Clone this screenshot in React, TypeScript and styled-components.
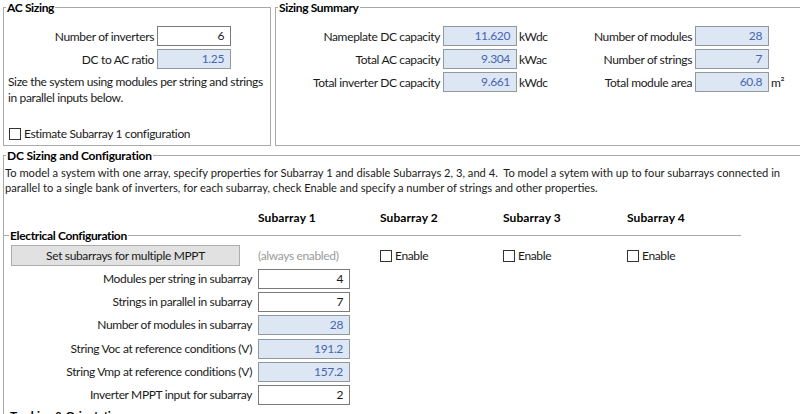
import React from "react";
import styled, { createGlobalStyle } from "styled-components";

const GlobalStyle = createGlobalStyle`
  html, body {
    margin: 0;
    padding: 0;
    background: #ffffff;
  }
  body {
    width: 800px;
    height: 414px;
    overflow: hidden;
    font-family: Lato, "Noto Sans", sans-serif;
    font-size: 12px;
    letter-spacing: -0.35px;
    color: #1a1a1a;
  }
`;

const Page = styled.div`
  width: 800px;
  height: 414px;
  overflow: hidden;
  padding-left: 3px;
  box-sizing: border-box;
`;

const TopRow = styled.div`
  display: flex;
  gap: 4px;
  width: 1000px;
`;

const Group = styled.fieldset<{ $w: number; $h: number }>`
  margin: 0;
  padding: 0;
  width: ${(p) => p.$w}px;
  height: ${(p) => p.$h}px;
  box-sizing: border-box;
  border: 1px solid #a9a9a9;
  min-width: 0;
`;

const Legend = styled.legend<{ $condensed?: boolean }>`
  padding: 0 1px;
  margin-left: 2px;
  font-weight: bold;
  font-size: 12px;
  letter-spacing: ${(p) => (p.$condensed ? -0.2 : -0.35)}px;
  line-height: 15px;
  color: #000;
`;

const FieldGrid = styled.div<{ $cols: string }>`
  display: grid;
  grid-template-columns: ${(p) => p.$cols};
  row-gap: 3px;
  align-items: center;
  margin-top: 11px;
`;

const Label = styled.div`
  text-align: right;
  white-space: nowrap;
  padding-right: 3px;
`;

const Unit = styled.div`
  padding-left: 2px;
  white-space: nowrap;
`;

const Field = styled.div<{ $readonly?: boolean; $w: number }>`
  width: ${(p) => p.$w}px;
  height: 20px;
  box-sizing: border-box;
  border: 1px solid ${(p) => (p.$readonly ? "#8f98a3" : "#7a7a7a")};
  background: ${(p) => (p.$readonly ? "#dde7f3" : "#ffffff")};
  color: ${(p) => (p.$readonly ? "#4565b3" : "#1a1a1a")};
  text-align: right;
  padding-right: 6px;
  line-height: 18px;
`;

const Note = styled.p`
  margin: 5px 0 0 4px;
  line-height: 16px;
  width: 262px;
`;

const CheckRow = styled.label`
  display: flex;
  align-items: center;
  gap: 3px;
  white-space: nowrap;
`;

const Box = styled.span`
  width: 12px;
  height: 12px;
  box-sizing: border-box;
  border: 1px solid #333;
  background: #fff;
  flex: none;
`;

const AcCheck = styled.div`
  margin: 20px 0 0 5px;
`;

const DcGroup = styled.fieldset`
  margin: 2px 0 0 0;
  padding: 0;
  width: 900px;
  height: 300px;
  box-sizing: border-box;
  border: 1px solid #a9a9a9;
  border-bottom: none;
`;

/* the description is drawn in a slightly condensed face in the original */
const Intro = styled.p`
  margin: 2px 0 0 1px;
  line-height: 15px;
  width: 850px;
  letter-spacing: 0;
  transform: scaleX(0.93);
  transform-origin: 0 0;
`;

const ColGrid = styled.div`
  display: grid;
  grid-template-columns: 254px 122px 123px 124px 120px;
  align-items: center;
`;

const HeadRow = styled(ColGrid)`
  margin-top: 14px;
  height: 16px;
  font-weight: bold;
  letter-spacing: 0.1px;
  color: #000;
`;

const Rule = styled.div<{ $w: number }>`
  display: flex;
  align-items: center;
  width: ${(p) => p.$w}px;
  height: 16px;
  margin-top: 2px;
  font-weight: bold;
  color: #000;
  &::before {
    content: "";
    width: 5px;
    border-top: 1px solid #a9a9a9;
    margin-right: 1px;
  }
  &::after {
    content: "";
    flex: 1;
    border-top: 1px solid #a9a9a9;
    margin-left: 1px;
  }
`;

const ConfigGrid = styled(ColGrid)`
  margin-top: 2px;
`;

const Button = styled.div`
  grid-column: 1;
  margin-left: 7px;
  width: 229px;
  height: 21px;
  box-sizing: border-box;
  border: 1px solid #adadad;
  background: #e1e1e1;
  text-align: center;
  line-height: 19px;
`;

const Muted = styled.div`
  color: #9a9a9a;
`;

const Cell = styled.div<{ $top?: number }>`
  margin-top: ${(p) => p.$top ?? 2}px;
`;

const RowLabel = styled(Cell)`
  text-align: right;
  padding-right: 6px;
  white-space: nowrap;
  line-height: 20px;
`;

const acRows = [
  { label: "Number of inverters", value: "6" },
  { label: "DC to AC ratio", value: "1.25", readonly: true },
];

const summaryRows = [
  ["Nameplate DC capacity", "11.620", "kWdc", "Number of modules", "28", ""],
  ["Total AC capacity", "9.304", "kWac", "Number of strings", "7", ""],
  ["Total inverter DC capacity", "9.661", "kWdc", "Total module area", "60.8", "m²"],
];

const configRows = [
  { label: "Modules per string in subarray", value: "4" },
  { label: "Strings in parallel in subarray", value: "7" },
  { label: "Number of modules in subarray", value: "28", readonly: true },
  { label: "String Voc at reference conditions (V)", value: "191.2", readonly: true, top: 4 },
  { label: "String Vmp at reference conditions (V)", value: "157.2", readonly: true },
  { label: "Inverter MPPT input for subarray", value: "2" },
];

export default function App() {
  return (
    <>
      <GlobalStyle />
      <Page>
        <TopRow>
          <Group $w={268} $h={146}>
            <Legend>AC Sizing</Legend>
            <FieldGrid $cols="153px 74px">
              {acRows.map((r) => (
                <React.Fragment key={r.label}>
                  <Label>{r.label}</Label>
                  <Field $w={74} $readonly={r.readonly}>
                    {r.value}
                  </Field>
                </React.Fragment>
              ))}
            </FieldGrid>
            <Note>
              Size the system using modules per string and strings in parallel
              inputs below.
            </Note>
            <AcCheck>
              <CheckRow>
                <Box />
                Estimate Subarray 1 configuration
              </CheckRow>
            </AcCheck>
          </Group>
          <Group $w={560} $h={146}>
            <Legend>Sizing Summary</Legend>
            <FieldGrid $cols="167px 74px 58px 120px 74px 30px">
              {summaryRows.map((r) => (
                <React.Fragment key={r[0]}>
                  <Label>{r[0]}</Label>
                  <Field $w={74} $readonly>
                    {r[1]}
                  </Field>
                  <Unit>{r[2]}</Unit>
                  <Label>{r[3]}</Label>
                  <Field $w={74} $readonly>
                    {r[4]}
                  </Field>
                  <Unit>{r[5]}</Unit>
                </React.Fragment>
              ))}
            </FieldGrid>
          </Group>
        </TopRow>

        <DcGroup>
          <Legend $condensed>DC Sizing and Configuration</Legend>
          <Intro>
            To model a system with one array, specify properties for Subarray 1
            and disable Subarrays 2, 3, and 4.&nbsp; To model a sytem with up to
            four subarrays connected in parallel to a single bank of inverters,
            for each subarray, check Enable and specify a number of strings and
            other properties.
          </Intro>

          <HeadRow>
            <span />
            <span>Subarray 1</span>
            <span>Subarray 2</span>
            <span>Subarray 3</span>
            <span>Subarray 4</span>
          </HeadRow>

          <Rule $w={737}>Electrical Configuration</Rule>

          <ConfigGrid>
            <Button>Set subarrays for multiple MPPT</Button>
            <Muted>(always enabled)</Muted>
            {[2, 3, 4].map((n) => (
              <CheckRow key={n}>
                <Box />
                Enable
              </CheckRow>
            ))}
            {configRows.map((r) => (
              <React.Fragment key={r.label}>
                <RowLabel $top={r.top ?? 3}>{r.label}</RowLabel>
                <Cell $top={r.top ?? 3}>
                  <Field $w={92} $readonly={r.readonly}>
                    {r.value}
                  </Field>
                </Cell>
                <span />
                <span />
                <span />
              </React.Fragment>
            ))}
          </ConfigGrid>

          <Rule $w={737}>Tracking &amp; Orientation</Rule>
        </DcGroup>
      </Page>
    </>
  );
}
